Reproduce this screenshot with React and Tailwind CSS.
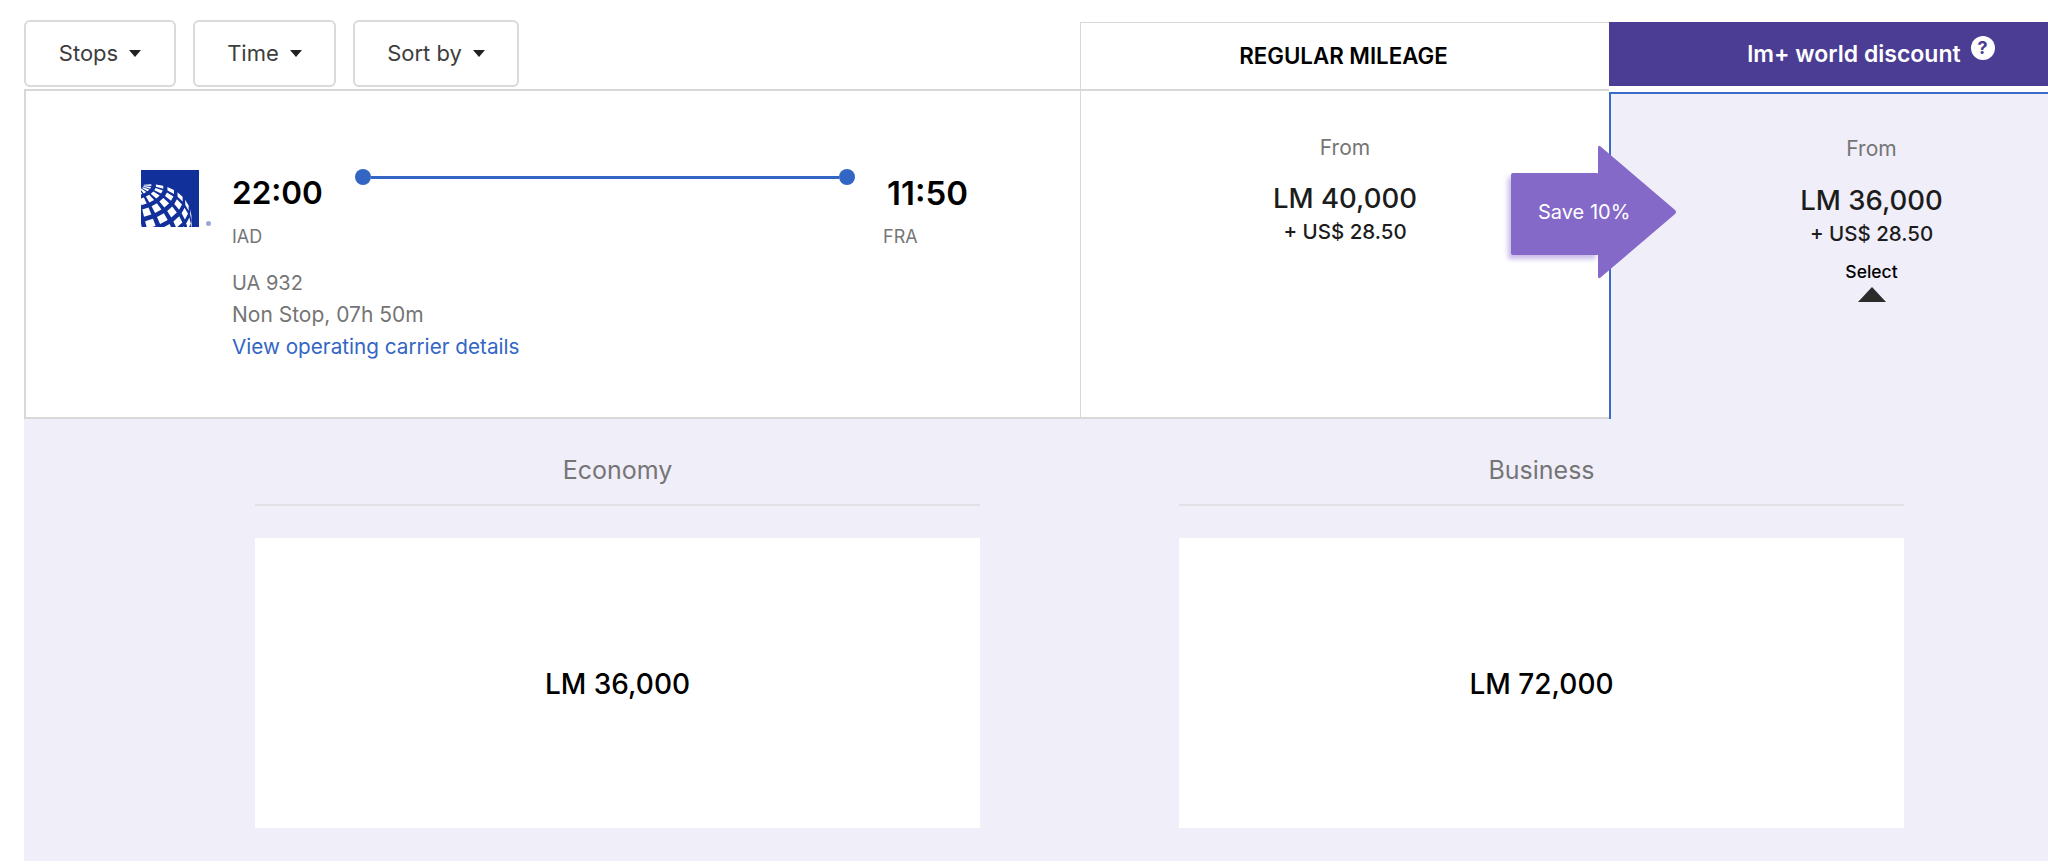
const FILTERS = ['Stops', 'Time', 'Sort by'];

const FILTER_WIDTHS = { Stops: 'w-[152px]', Time: 'w-[143px]', 'Sort by': 'w-[166px]' };

// orthographic projection of one lat/long tile of the globe in the logo
function globeTile(lat0, lat1, lon0, lon1) {
  const tilt = (32 * Math.PI) / 180;
  const roll = (16 * Math.PI) / 180;
  const cx = 7;
  const cy = 52;
  const r = 44;
  const project = (lat, lon) => {
    const a = (lat * Math.PI) / 180;
    const b = (lon * Math.PI) / 180;
    const x = Math.cos(a) * Math.sin(b);
    const y = Math.sin(a) * Math.cos(tilt) - Math.cos(a) * Math.cos(b) * Math.sin(tilt);
    const px = x * Math.cos(roll) - y * Math.sin(roll);
    const py = x * Math.sin(roll) + y * Math.cos(roll);
    return `${(cx + px * r).toFixed(1)},${(cy - py * r).toFixed(1)}`;
  };
  return [project(lat0, lon0), project(lat0, lon1), project(lat1, lon1), project(lat1, lon0)].join(' ');
}

function UnitedLogo() {
  const tiles = [];
  for (let i = 0; i < 7; i++) {
    for (let j = 0; j < 7; j++) {
      const lat = -28 + i * 16;
      const lon = -48 + j * 20;
      tiles.push(globeTile(lat + 4, lat + 14, lon + 4, lon + 17));
    }
  }
  return (
    <div className="relative w-[58px] h-[57px] shrink-0 mt-px">
      <svg viewBox="0 0 58 57" className="w-[58px] h-[57px] block">
        <clipPath id="logo-clip">
          <rect width="58" height="57" />
        </clipPath>
        <rect width="58" height="57" fill="#12309a" />
        <g clipPath="url(#logo-clip)" fill="#fff">
          {tiles.map((t, i) => <polygon key={i} points={t} />)}
        </g>
      </svg>
      <span className="absolute left-[65px] top-[51px] w-[5px] h-[5px] rounded-full bg-[#9aa6d6]" />
    </div>
  );
}

function SaveArrow() {
  return (
    <div className="absolute left-[1487px] top-[56px] w-[165px] h-[134px] z-10">
      <div className="absolute left-0 top-[28px] w-[88px] h-[82px] bg-[#8469c9] rounded-[2px] shadow-[-3px_4px_5px_rgba(132,105,201,0.45)]" />
      <svg viewBox="0 0 80 134" className="absolute left-[86px] top-0 w-[80px] h-[134px]">
        <path d="M1 3 Q1 0 3 1 L78 65 Q80 67 78 69 L3 133 Q1 134 1 131 Z" fill="#8469c9" />
      </svg>
      <span className="absolute left-[27px] top-[53px] text-[20px] leading-[28px] text-white whitespace-nowrap">Save 10%</span>
    </div>
  );
}

export default function App() {
  return (
    <div className="w-[2048px] h-[864px] bg-white overflow-hidden font-['Inter','Liberation_Sans',sans-serif]">
      <div className="h-[89px] pl-6 flex justify-between">
        <div className="flex gap-[17px] pt-5">
          {FILTERS.map((f) => (
            <button key={f} className={`${FILTER_WIDTHS[f]} h-[67px] border-2 border-[#dadada] rounded-md flex items-center justify-center gap-[11px] text-[22px] text-[#3d3d3d]`}>
              {f}
              <span className="w-0 h-0 border-l-[6px] border-r-[6px] border-t-[7px] border-l-transparent border-r-transparent border-t-[#222]" />
            </button>
          ))}
        </div>
        <div className="flex pt-[22px] w-[968px] shrink-0">
          <div className="w-[529px] shrink-0 pr-[3px] border-t border-l border-[#d8d8d8] flex items-center justify-center text-[22.3px] font-semibold text-black">
            REGULAR MILEAGE
          </div>
          <div className="w-[523px] shrink-0 h-[64px] bg-[#4b3d93] flex items-center justify-center gap-[10px] pl-[1px] text-[23px] font-semibold text-white">
            lm+ world discount
            <span className="w-6 h-6 rounded-full bg-white text-[#4b3d93] text-[18px] font-bold leading-6 text-center -mt-3">?</span>
          </div>
        </div>
      </div>

      <div className="relative ml-6 h-[330px] flex">
        <div className="w-[1056px] shrink-0 h-full border-t-2 border-b-2 border-l-2 border-[#d8d8d8] flex items-start pt-[78px] pl-[115px]">
          <UnitedLogo />
          <div className="ml-[33px]">
            <div className="flex w-[737px]">
              <div className="w-[123px]">
                <div className="mt-1 text-[31.5px] leading-10 font-semibold text-black">22:00</div>
                <div className="mt-3 text-[18px] leading-6 text-[#757575]">IAD</div>
              </div>
              <div className="w-[500px] h-4 flex items-center">
                <span className="w-4 h-4 rounded-full bg-[#3366c4] shrink-0" />
                <span className="flex-1 h-[3px] bg-[#3366c4]" />
                <span className="w-4 h-4 rounded-full bg-[#3366c4] shrink-0" />
              </div>
              <div className="pl-7">
                <div className="mt-1 pl-1 text-[33px] leading-10 font-semibold text-black">11:50</div>
                <div className="mt-3 text-[18px] leading-6 text-[#757575]">FRA</div>
              </div>
            </div>
            <div className="mt-[18px] text-[20px] leading-8 text-[#757575]">UA 932</div>
            <div className="text-[21px] leading-8 text-[#757575]">Non Stop, 07h 50m</div>
            <div className="text-[20.7px] leading-8 text-[#3366c4]">View operating carrier details</div>
          </div>
        </div>

        <div className="w-[529px] shrink-0 h-full border-t-2 border-b-2 border-l border-[#d8d8d8] flex flex-col items-center pt-[43px]">
          <div className="text-[21px] leading-7 text-[#757575]">From</div>
          <div className="mt-[18px] text-[27.5px] leading-9 font-medium text-[#1c1c1c]">LM 40,000</div>
          <div className="mt-0.5 text-[20.5px] leading-7 font-medium text-[#1c1c1c]">+ US$ 28.50</div>
        </div>

        <div className="w-[523px] shrink-0 mt-[3px] border-t-2 border-l-2 border-[#3a6bc9] bg-[#f0eef9] flex flex-col items-center pt-[41px]">
          <div className="text-[21px] leading-7 text-[#757575]">From</div>
          <div className="mt-[19px] text-[27.5px] leading-9 font-medium text-[#1c1c1c]">LM 36,000</div>
          <div className="mt-0.5 text-[20.5px] leading-7 font-medium text-[#1c1c1c]">+ US$ 28.50</div>
          <div className="mt-3 text-[17.5px] leading-6 font-medium text-black">Select</div>
          <span className="mt-[3px] w-0 h-0 border-l-[14px] border-r-[14px] border-b-[15px] border-l-transparent border-r-transparent border-b-[#2b2b2b]" />
        </div>

        <SaveArrow />
      </div>

      <div className="ml-6 h-[442px] bg-[#f0eef9] pl-[231px] pt-[35px] flex gap-[199px]">
        {[['Economy', 'LM 36,000'], ['Business', 'LM 72,000']].map(([cabin, price]) => (
          <div key={cabin} className="w-[725px]">
            <div className="pb-[18px] border-b-2 border-[#e2e1e6] text-center text-[25px] leading-8 text-[#757575]">{cabin}</div>
            <div className="mt-8 h-[290px] pt-0.5 bg-white flex items-center justify-center text-[28px] font-medium text-black">{price}</div>
          </div>
        ))}
      </div>
    </div>
  );
}
